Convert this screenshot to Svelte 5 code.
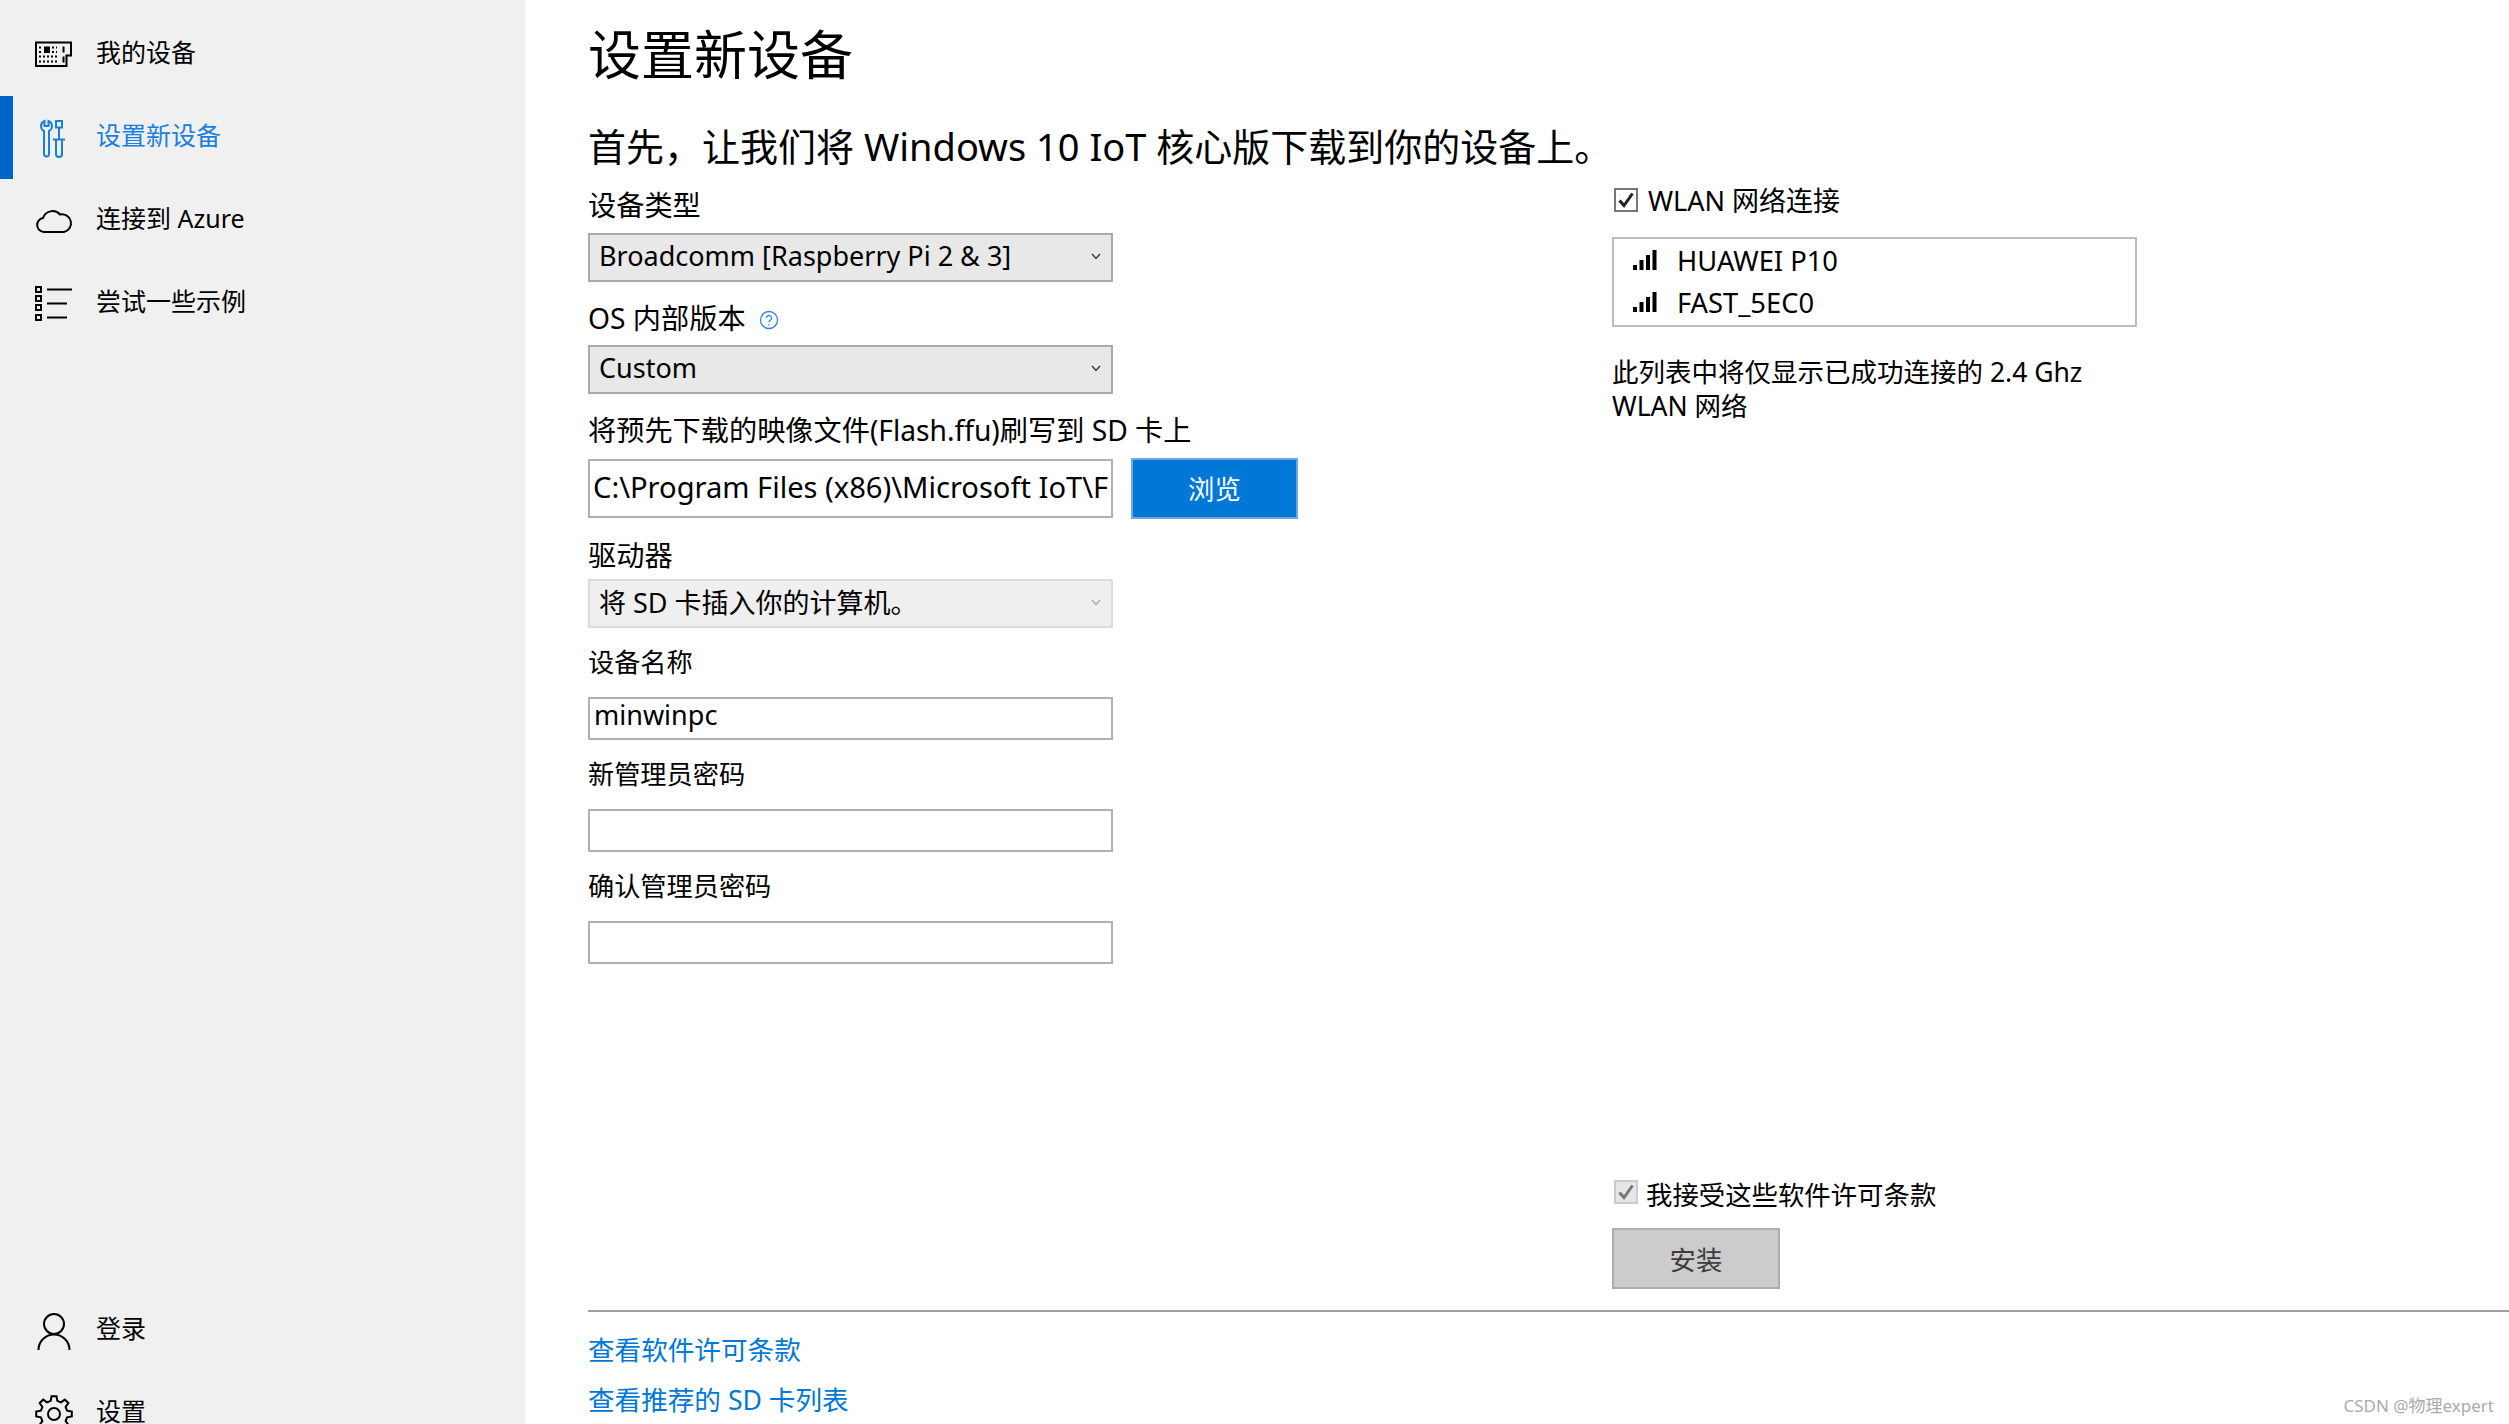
<script>
  // menu rows, icon is picked by name
  const topItems = [
    { icon: 'device', label: '我的设备' },
    { icon: 'tools', label: '设置新设备', active: true },
    { icon: 'cloud', label: '连接到 Azure' },
    { icon: 'list', label: '尝试一些示例' }
  ]
  const bottomItems = [
    { icon: 'user', label: '登录' },
    { icon: 'gear', label: '设置' }
  ]
  const networks = ['HUAWEI P10', 'FAST_5EC0']
  const flashPath = 'C:\\Program Files (x86)\\Microsoft IoT\\FFU\\RaspberryPi2\\flash.ffu'

  // 8 teeth around the centre of the 38 unit icon box
  function gearPath() {
    const pt = (r, deg) => {
      const a = (deg - 90) * Math.PI / 180
      return (19 + r * Math.cos(a)).toFixed(1) + ' ' + (19 + r * Math.sin(a)).toFixed(1)
    }
    let d = ''
    for (let i = 0; i < 8; i++) {
      const c = i * 45
      d += (i ? 'L' : 'M') + pt(13.5, c - 14) + 'L' + pt(18, c - 8) + 'L' + pt(18, c + 8) + 'L' + pt(13.5, c + 14)
    }
    return d + 'Z'
  }
</script>

{#snippet navIcon(name)}
  <svg class="nav-icon" viewBox="0 0 38 38" fill="none" stroke="currentColor" stroke-width="2">
    {#if name === 'device'}
      <path d="M1 6.500H36V19.500H31.500V30H1Z" />
      <rect x="9" y="10.500" width="6" height="6.500" fill="currentColor" stroke="none" />
      <path d="M4 11.500h3M4 16h3M4 20.500h18M4 25.500h18M17 11.500h5M17 16h5" stroke-dasharray="2 2" />
      <path d="M28.500 10.500v6M28.500 20.500v6" />
    {:else if name === 'tools'}
      <path d="M9.500 2a5.500 5.500 0 0 0-.500 10V35a2.500 2.500 0 0 0 5 0V12a5.500 5.500 0 0 0-.500-10V7h-4Z" />
      <path d="M21 2h6v6.500h-6ZM24 8.500V20.500M18 20.500H30M21 20.500V35a3 3 0 0 0 6 0V20.500" />
    {:else if name === 'cloud'}
      <path d="M9 30a7 7 0 0 1-1-13.900A10 10 0 0 1 25 12.500a8.800 8.800 0 0 1 4 17.500Z" />
    {:else if name === 'list'}
      <path d="M12 4.500H37M12 18.500H32M12 32.500H32" />
      <path d="M1 2h5v5H1ZM1 11h5v5H1ZM1 20h5v5H1ZM1 30h5v5H1Z" />
    {:else if name === 'user'}
      <circle cx="19" cy="12" r="10" />
      <path d="M3.500 38a15.500 15.500 0 0 1 31 0" />
    {:else}
      <circle cx="19" cy="19" r="6" />
      <path d={gearPath()} />
    {/if}
  </svg>
{/snippet}

{#snippet navRow(item)}
  <a class="nav-row" class:active={item.active} href="/">
    {@render navIcon(item.icon)}
    <span>{item.label}</span>
  </a>
{/snippet}

{#snippet chevron()}
  <svg class="chevron" viewBox="0 0 10 7" fill="none" stroke="currentColor" stroke-width="1.300">
    <path d="M1 1l4 4.500 4-4.500" />
  </svg>
{/snippet}

{#snippet signal()}
  <svg class="signal" viewBox="0 0 24 20" fill="currentColor">
    <rect x="0" y="15" width="4" height="5" />
    <rect x="6.500" y="10" width="4" height="10" />
    <rect x="13" y="5" width="4" height="15" />
    <rect x="19.500" y="0" width="4" height="20" />
  </svg>
{/snippet}

{#snippet tick()}
  <svg viewBox="0 0 20 20" fill="none" stroke="currentColor" stroke-width="3"><path d="M3.500 10.500l4.500 5 8.500-12" /></svg>
{/snippet}

<div class="window">
  <nav class="sidebar">
    <div class="nav-top">
      {#each topItems as item}
        {@render navRow(item)}
      {/each}
    </div>
    <div class="nav-bottom">
      {#each bottomItems as item}
        {@render navRow(item)}
      {/each}
    </div>
  </nav>

  <main class="content">
    <h1>设置新设备</h1>
    <h2>首先，让我们将 Windows 10 IoT 核心版下载到你的设备上。</h2>

    <div class="columns">
      <div class="form">
        <div class="field first">
          <label for="board"><span>设备类型</span></label>
          <div class="select" id="board"><span>Broadcomm [Raspberry Pi 2 &amp; 3]</span>{@render chevron()}</div>
        </div>

        <div class="field narrow">
          <label for="build"><span>OS 内部版本</span><svg class="help" viewBox="0 0 20 20" fill="none" stroke="currentColor" stroke-width="1.300">
              <circle cx="10" cy="10" r="8.500" />
              <path d="M7.500 8a2.500 2.500 0 1 1 3.800 2.100c-.9.600-1.300 1-1.300 2.200" />
              <path d="M10 14v1.600" />
            </svg></label>
          <div class="select" id="build"><span>Custom</span>{@render chevron()}</div>
        </div>

        <div class="field mid">
          <label for="image"><span>将预先下载的映像文件(Flash.ffu)刷写到 SD 卡上</span></label>
          <div class="browse-row">
            <input class="big" id="image" value={flashPath} />
            <button class="browse">浏览</button>
          </div>
        </div>

        <div class="field tight">
          <label for="drive"><span>驱动器</span></label>
          <div class="select off" id="drive"><span>将 SD 卡插入你的计算机。</span>{@render chevron()}</div>
        </div>

        <div class="field wide">
          <label for="name"><span>设备名称</span></label>
          <input id="name" value="minwinpc" />
        </div>

        <div class="field wide">
          <label for="pw"><span>新管理员密码</span></label>
          <input id="pw" />
        </div>

        <div class="field wide">
          <label for="pw2"><span>确认管理员密码</span></label>
          <input id="pw2" />
        </div>
      </div>

      <div class="side">
        <div>
          <div class="check-row wlan">
            <span class="check">{@render tick()}</span>
            <span>WLAN 网络连接</span>
          </div>
          <ul class="networks">
            {#each networks as net}
              <li>{@render signal()}<span>{net}</span></li>
            {/each}
          </ul>
          <p class="note">此列表中将仅显示已成功连接的 2.4 Ghz WLAN 网络</p>
        </div>

        <div>
          <div class="check-row licence">
            <span class="check off">{@render tick()}</span>
            <span>我接受这些软件许可条款</span>
          </div>
          <button class="install">安装</button>
        </div>
      </div>
    </div>

    <footer class="links">
      <a href="/">查看软件许可条款</a>
      <a href="/">查看推荐的 SD 卡列表</a>
    </footer>
  </main>

  <div class="watermark">CSDN @物理expert</div>
</div>

<style>
  :global(body) {
    margin: 0;
    background: #fff;
  }

  .window {
    position: relative;
    display: flex;
    height: 1424px;
    overflow: hidden;
    color: #000;
    font-family: "Noto Sans", "Noto Sans CJK SC", sans-serif;
    font-size: 26.400px;
  }

  /* sidebar */
  .sidebar {
    width: 525px;
    flex: none;
    padding-top: 13px;
    background: #f0f0f0;
  }

  .nav-bottom {
    margin-top: 944px;
  }

  .nav-row {
    display: flex;
    align-items: center;
    gap: 23px;
    height: 83px;
    padding-left: 35px;
    color: #000;
    font-size: 25px;
    text-decoration: none;
    box-sizing: border-box;
  }

  .nav-row span {
    padding-bottom: 7px;
  }

  .nav-row.active {
    color: #1a7fdc;
    box-shadow: inset 13px 0 0 #0063c8;
  }

  .nav-icon {
    width: 38px;
    height: 38px;
    flex: none;
    overflow: visible;
  }

  /* main area */
  .content {
    flex: 1;
    min-width: 0;
    display: flex;
    flex-direction: column;
    padding-left: 63px;
  }

  h1 {
    margin: 20px 0 0;
    font-size: 53px;
    font-weight: 400;
    line-height: 70px;
  }

  h2 {
    margin: 31px 0 0;
    font-size: 38px;
    font-weight: 400;
    line-height: 50px;
    white-space: nowrap;
  }

  .columns {
    flex: 1;
    display: grid;
    grid-template-columns: 1024px 1fr;
    min-height: 0;
  }

  /* left form */
  .field {
    margin-top: 18px;
  }

  .field.first {
    margin-top: 16px;
  }

  label {
    display: flex;
    align-items: center;
    gap: 13px;
    height: 36px;
    font-size: 28.200px;
    line-height: 36px;
    white-space: pre;
  }

  .field .select {
    margin-top: 10px;
  }

  .field.narrow .select {
    margin-top: 9px;
  }

  .field.mid .browse-row {
    margin-top: 10px;
  }

  .field.tight {
    margin-top: 18px;
  }

  .field.tight .select {
    margin-top: 6px;
  }

  .field.wide {
    margin-top: 17px;
  }

  .field.wide label {
    height: 34px;
    margin-bottom: 18px;
    font-size: 26.200px;
  }

  .select {
    display: flex;
    align-items: center;
    justify-content: space-between;
    width: 525px;
    height: 49px;
    padding: 0 10px 4px 9px;
    box-sizing: border-box;
    border: 2px solid #a9a9a9;
    background: #e8e8e8;
    font-size: 27px;
    white-space: pre;
  }

  .select.off {
    border-color: #dcdcdc;
    background: #efefef;
  }

  .select.off .chevron {
    color: #aaa;
  }

  .chevron {
    width: 10px;
    height: 7px;
    margin-top: 2px;
    color: #333;
  }

  .help {
    width: 20px;
    height: 20px;
    margin-top: 3px;
    color: #2f86dc;
  }

  input {
    display: block;
    width: 525px;
    height: 43px;
    padding: 0 4px 8px;
    box-sizing: border-box;
    border: 2px solid #b0b0b4;
    border-radius: 0;
    background: #fff;
    color: #000;
    font: inherit;
    font-size: 27px;
    outline: none;
  }

  input.big {
    height: 59px;
    padding: 0 3px 3px;
    font-size: 29.100px;
  }

  .browse-row {
    display: flex;
    align-items: center;
    gap: 18px;
  }

  button {
    font: inherit;
    border-radius: 0;
    cursor: pointer;
  }

  .browse {
    width: 167px;
    height: 61px;
    padding-bottom: 3px;
    border: 2px solid #6ea8dc;
    background: #0078d7;
    color: #fff;
  }

  /* right column */
  .side {
    display: flex;
    flex-direction: column;
    justify-content: space-between;
    padding-bottom: 21px;
    min-height: 0;
  }

  .check-row {
    display: flex;
    gap: 10px;
    height: 34px;
    line-height: 34px;
    white-space: pre;
  }

  .check-row.wlan {
    margin-top: 13px;
    font-size: 27px;
  }

  .check-row.wlan .check {
    margin: 4px 0 0 2px;
  }

  .check-row.licence {
    gap: 8px;
  }

  .check-row.licence .check {
    margin: 2px 0 0 2px;
  }

  .check {
    display: flex;
    width: 24px;
    height: 24px;
    flex: none;
    box-sizing: border-box;
    border: 2px solid #777;
    background: #fff;
    color: #222;
  }

  .check.off {
    border-color: #ccc;
    background: #e6e6e6;
    color: #777;
  }

  .networks {
    width: 525px;
    height: 90px;
    margin: 19px 0 0;
    padding: 0;
    box-sizing: border-box;
    border: 2px solid #bcbcbc;
    list-style: none;
    font-size: 27.300px;
  }

  .networks li {
    display: flex;
    align-items: center;
    gap: 20px;
    height: 42px;
    padding-left: 19px;
  }

  .signal {
    width: 24px;
    height: 20px;
    flex: none;
  }

  .note {
    width: 500px;
    margin: 28px 0 0;
    font-size: 26.500px;
    line-height: 34px;
  }

  .install {
    display: block;
    width: 168px;
    height: 61px;
    margin-top: 16px;
    border: 2px solid #adadad;
    background: #cccccc;
    color: #3c3c3c;
  }

  /* links under the line */
  .links {
    flex: none;
    display: flex;
    flex-direction: column;
    height: 114px;
    padding-top: 13px;
    box-sizing: border-box;
    border-top: 2px solid #a0a0a0;
  }

  .links a {
    font-size: 26.600px;
    line-height: 50px;
    color: #0078d7;
    text-decoration: none;
  }

  .watermark {
    position: absolute;
    right: 15px;
    bottom: 4px;
    color: #aaa;
    font-size: 17px;
    line-height: 28px;
  }
</style>
